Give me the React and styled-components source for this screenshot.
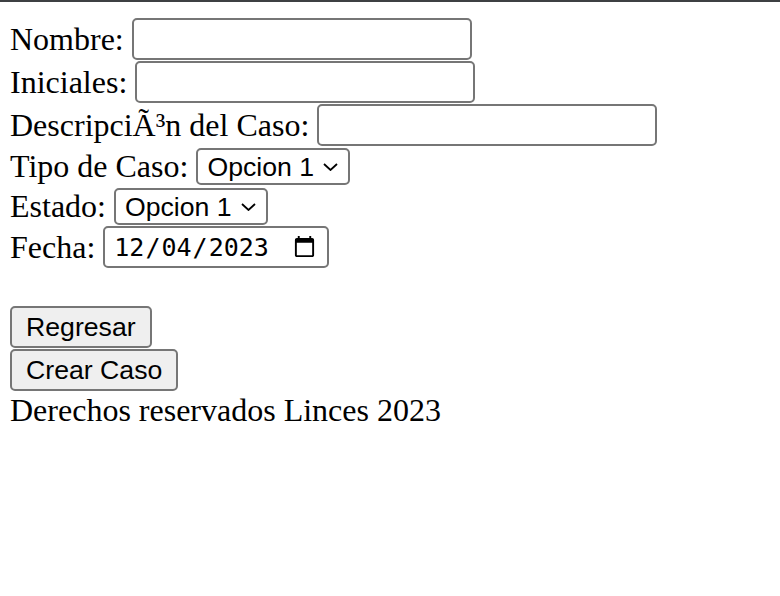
import React from 'react';
import styled, { createGlobalStyle } from 'styled-components';

const GlobalStyle = createGlobalStyle`
  body {
    margin: 0;
    background: #fff;
  }
`;

const Page = styled.div`
  min-height: 596px;
  box-sizing: border-box;
  border-top: 2px solid #3d4043;
  padding: 16px 10px 0 10px;
  font-family: "Liberation Serif", "Times New Roman", serif;
  font-size: 32px;
  color: #000;
`;

const Row = styled.div`
  display: flex;
  align-items: center;
  gap: 8px;
  padding: ${(props) => props.pad || '0 0 1px 0'};
`;

const Label = styled.label`
  white-space: nowrap;
  line-height: normal;
`;

const TextInput = styled.input`
  box-sizing: border-box;
  width: 340px;
  height: 42px;
  border: 2px solid #767676;
  border-radius: 5px;
  padding: 0 4px;
  font-family: "Liberation Sans", Arial, sans-serif;
  font-size: 26.67px;
  background: #fff;
`;

const SelectWrap = styled.span`
  position: relative;
  display: inline-flex;
`;

const Select = styled.select`
  appearance: none;
  box-sizing: border-box;
  width: 154px;
  height: 37px;
  border: 2px solid #767676;
  border-radius: 5px;
  padding: 0 30px 0 9px;
  font-family: "Liberation Sans", Arial, sans-serif;
  font-size: 26.67px;
  color: #000;
  background: #fff;
`;

const Chevron = styled.svg`
  position: absolute;
  right: 12px;
  top: 50%;
  margin-top: -4px;
  width: 15px;
  height: 8px;
  pointer-events: none;
`;

const DateInput = styled.input`
  box-sizing: border-box;
  width: 226px;
  height: 42px;
  border: 2px solid #767676;
  border-radius: 5px;
  padding: 0 8px;
  font-family: "DejaVu Sans Mono", "Liberation Mono", monospace;
  font-size: 25px;
  color: #000;
  background: #fff;
`;

const Spacer = styled.div`
  height: 38px;
`;

const Button = styled.button`
  display: block;
  box-sizing: border-box;
  height: 42px;
  margin: 0 0 1px 0;
  padding: 0 14px;
  border: 2px solid #767676;
  border-radius: 5px;
  background: #efefef;
  font-family: "Liberation Sans", Arial, sans-serif;
  font-size: 26.67px;
  color: #000;
`;

const Footer = styled.p`
  margin: 0;
  line-height: normal;
`;

const opciones = ['Opcion 1', 'Opcion 2', 'Opcion 3'];

function Dropdown({ id }) {
  return (
    <SelectWrap>
      <Select id={id} defaultValue="Opcion 1">
        {opciones.map((o) => (
          <option key={o}>{o}</option>
        ))}
      </Select>
      <Chevron viewBox="0 0 15 8">
        <path d="M1 1 L7.5 7 L14 1" fill="none" stroke="#000" strokeWidth="1.8" />
      </Chevron>
    </SelectWrap>
  );
}

export default function App() {
  return (
    <>
      <GlobalStyle />
      <Page>
        <Row>
          <Label htmlFor="nombre">Nombre:</Label>
          <TextInput id="nombre" type="text" />
        </Row>
        <Row>
          <Label htmlFor="iniciales">Iniciales:</Label>
          <TextInput id="iniciales" type="text" />
        </Row>
        <Row>
          <Label htmlFor="descripcion">DescripciÃ³n del Caso:</Label>
          <TextInput id="descripcion" type="text" />
        </Row>
        <Row pad="1px 0 2px 0">
          <Label htmlFor="tipo">Tipo de Caso:</Label>
          <Dropdown id="tipo" />
        </Row>
        <Row pad="1px 0 1px 0">
          <Label htmlFor="estado">Estado:</Label>
          <Dropdown id="estado" />
        </Row>
        <Row pad="0">
          <Label htmlFor="fecha">Fecha:</Label>
          <DateInput id="fecha" type="date" defaultValue="2023-12-04" />
        </Row>
        <Spacer />
        <Button type="button">Regresar</Button>
        <Button type="button">Crear Caso</Button>
        <Footer>Derechos reservados Linces 2023</Footer>
      </Page>
    </>
  );
}
